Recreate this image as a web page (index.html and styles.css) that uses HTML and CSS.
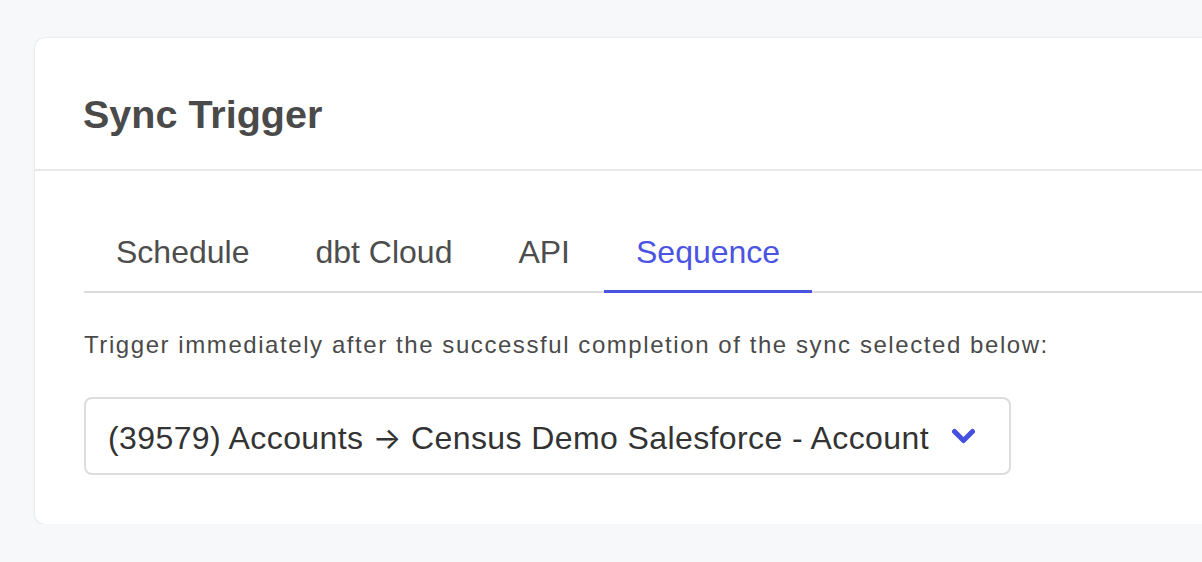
FILE: index.html
```html
<!DOCTYPE html>
<html lang="en">
<head>
<meta charset="utf-8">
<title>Sync Trigger</title>
<link rel="stylesheet" href="styles.css">
</head>
<body>
<div class="page">
  <section class="card">
    <header class="card-header">
      <h1 class="title">Sync Trigger</h1>
    </header>
    <div class="card-body">
      <nav class="tabs">
        <div class="tab">Schedule</div>
        <div class="tab">dbt Cloud</div>
        <div class="tab">API</div>
        <div class="tab active">Sequence</div>
      </nav>
      <p class="desc">Trigger immediately after the successful completion of the sync selected below:</p>
      <div class="select">
        <span class="select-text">(39579) Accounts <span class="arrow">→</span> Census Demo Salesforce - Account</span>
        <svg class="chevron" width="25" height="16" viewBox="0 0 25 16" aria-hidden="true">
          <path d="M3.5 3.5 L12.5 12.5 L21.5 3.5" fill="none" stroke="#4650e0" stroke-width="5" stroke-linecap="round" stroke-linejoin="round"/>
        </svg>
      </div>
    </div>
  </section>
</div>
</body>
</html>
```
FILE: styles.css
```css
html, body {
  margin: 0;
  padding: 0;
  background: #f7f8fa;
  overflow: hidden;
  font-family: "Liberation Sans", Arial, sans-serif;
}

.page {
  padding: 38px 0 0 35px;
  width: 1400px;
}

.card {
  width: 1300px;
  background: #ffffff;
  border-radius: 10px;
  box-shadow: 0 0 0 1px rgba(0, 0, 0, 0.035), 0 2px 6px rgba(0, 0, 0, 0.04);
}

.card-header {
  padding: 52px 48px 31px 48px;
  border-bottom: 2px solid #e8e8e8;
}

.title {
  margin: 0;
  font-size: 39.5px;
  line-height: 48px;
  font-weight: 700;
  color: #4a4a4a;
}

.card-body {
  padding: 57px 48px 49px 49px;
}

.tabs {
  display: flex;
  gap: 2px;
  border-bottom: 2px solid #dcdcdc;
}

.tab {
  padding: 0 32px 14px 32px;
  font-size: 32px;
  line-height: 48px;
  color: #4d4d4d;
  border-bottom: 3px solid transparent;
  margin-bottom: -2px;
}

.tab.active {
  color: #4b54e2;
  border-bottom-color: #4b54e2;
}

.desc {
  margin: 34px 0 34px 0;
  font-size: 24px;
  line-height: 36px;
  letter-spacing: 1.57px;
  color: #4a4a4a;
}

.select {
  box-sizing: border-box;
  width: 927px;
  display: flex;
  align-items: center;
  justify-content: space-between;
  padding: 15px 33px 11px 22px;
  border: 2px solid #dddddd;
  border-radius: 8px;
}

.select-text {
  font-size: 32px;
  line-height: 48px;
  color: #333333;
  letter-spacing: 0.4px;
  white-space: nowrap;
}

.arrow {
  font-family: Inter, "DejaVu Sans", sans-serif;
  font-size: 30px;
}

.chevron {
  display: block;
  flex: none;
  margin-top: -4px;
}
```
